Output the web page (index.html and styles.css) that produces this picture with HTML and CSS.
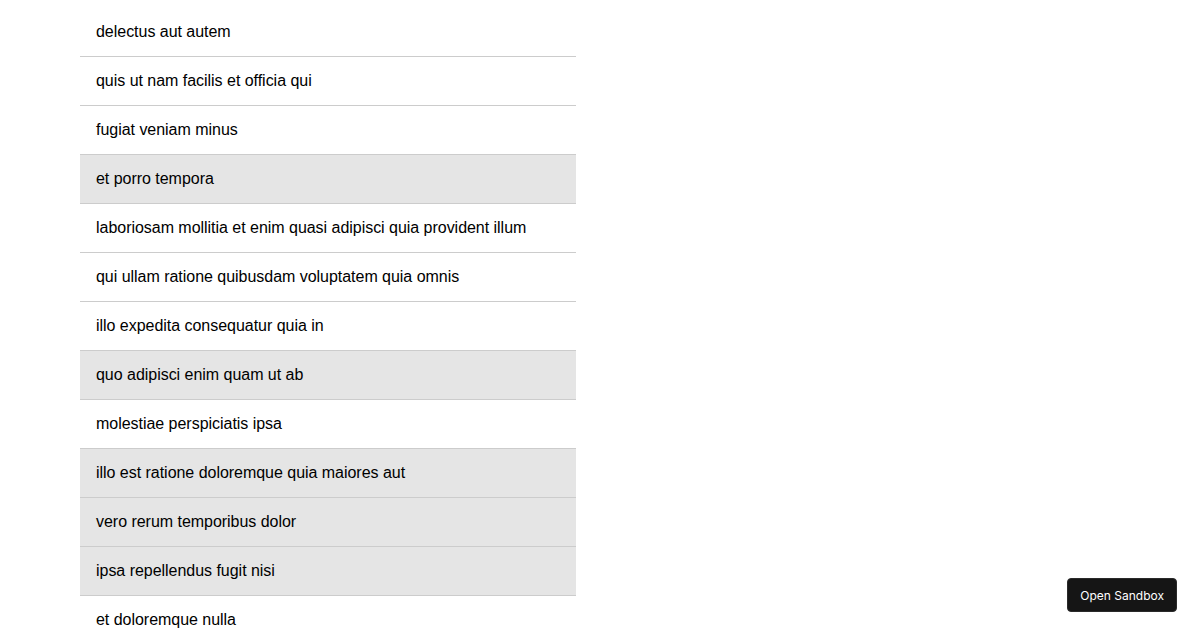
FILE: index.html
```html
<!DOCTYPE html>
<html lang="en">
<head>
  <meta charset="UTF-8" />
  <meta name="viewport" content="width=device-width, initial-scale=1.0"/>
  <title>List</title>
  <link rel="stylesheet" href="styles.css">
</head>
<body>

  <ul class="list">
    <li class="item">delectus aut autem</li>
    <li class="item">quis ut nam facilis et officia qui</li>
    <li class="item">fugiat veniam minus</li>
    <li class="item done">et porro tempora</li>
    <li class="item">laboriosam mollitia et enim quasi adipisci quia provident illum</li>
    <li class="item">qui ullam ratione quibusdam voluptatem quia omnis</li>
    <li class="item">illo expedita consequatur quia in</li>
    <li class="item done">quo adipisci enim quam ut ab</li>
    <li class="item">molestiae perspiciatis ipsa</li>
    <li class="item done">illo est ratione doloremque quia maiores aut</li>
    <li class="item done">vero rerum temporibus dolor</li>
    <li class="item done">ipsa repellendus fugit nisi</li>
    <li class="item">et doloremque nulla</li>
  </ul>

  <button class="sandbox-btn">Open Sandbox</button>

</body>
</html>
```

FILE: styles.css
```css
body {
  margin: 8px;
  font-family: "Liberation Sans", Arial, sans-serif;
  background-color: #fff;
  color: #000;
}

.list {
  list-style: none;
  margin: 0 0 0 72px;
  padding: 0;
  width: 496px;
}

.item {
  height: 48px;
  line-height: 48px;
  padding: 0 16px;
  font-size: 16px;
  letter-spacing: -0.03px;
  border-bottom: 1px solid #ccc;
  white-space: nowrap;
}

.item.done {
  background-color: #e5e5e5;
}

.sandbox-btn {
  position: fixed;
  right: 23px;
  bottom: 18px;
  height: 34px;
  padding: 0 12px;
  background-color: #151515;
  color: #fff;
  border: 1px solid #2a2a2a;
  border-radius: 4px;
  font-family: Inter, "Liberation Sans", sans-serif;
  font-size: 12px;
  cursor: pointer;
}
```
